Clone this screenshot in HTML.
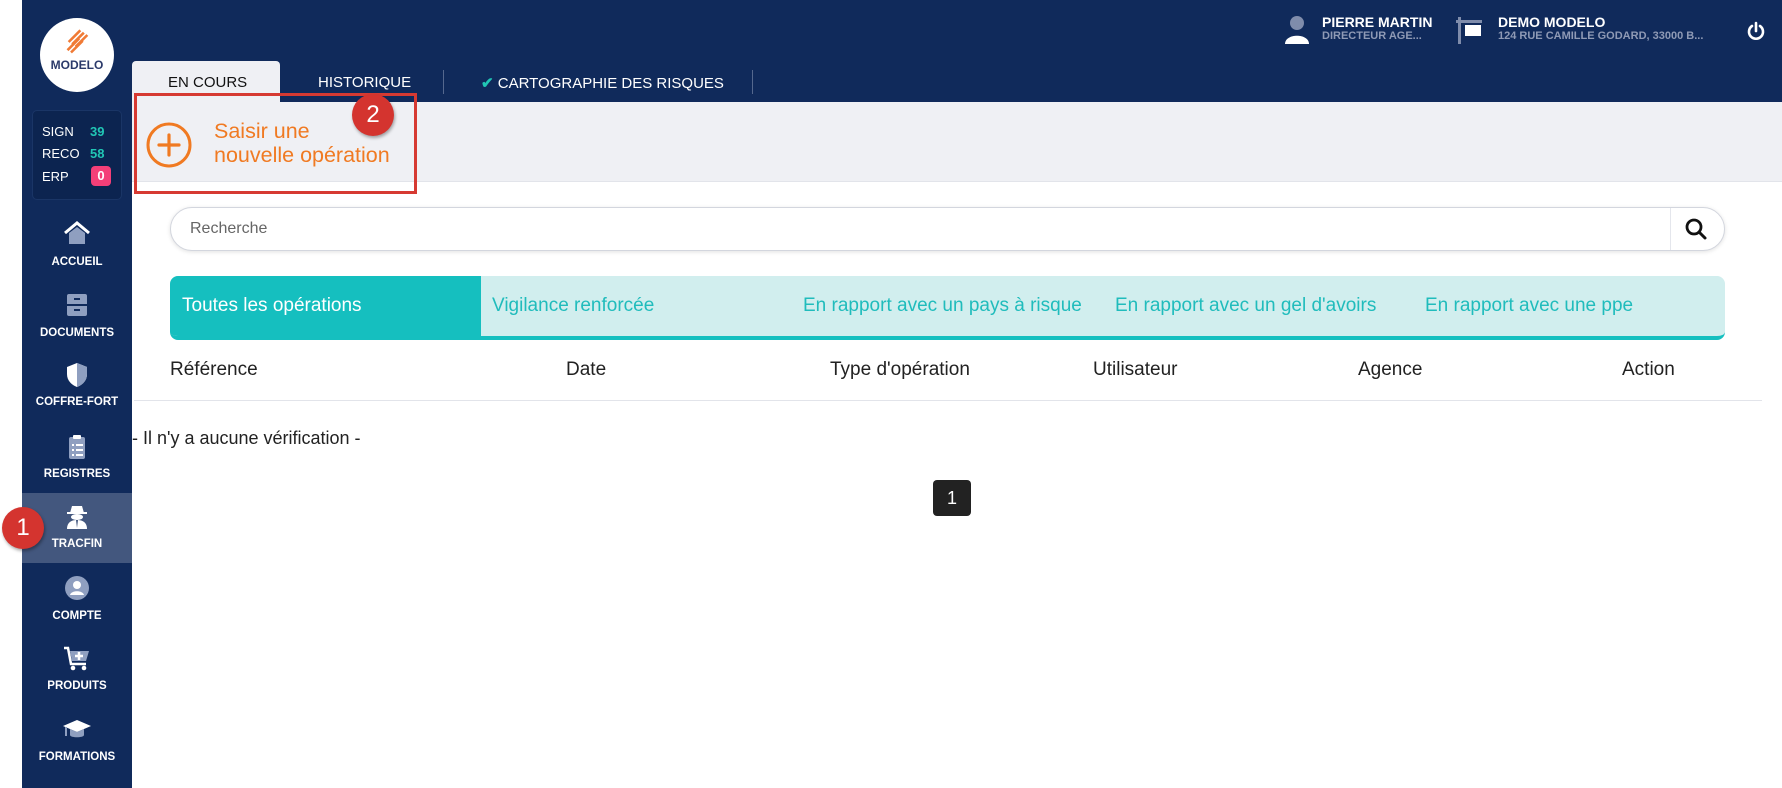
<!DOCTYPE html>
<html><head><meta charset="utf-8"><style>
*{margin:0;padding:0;box-sizing:border-box}
body{width:1782px;height:788px;background:#fff;font-family:"Liberation Sans",Arial,sans-serif;position:relative;overflow:hidden}
.abs{position:absolute}
.top{left:22px;top:0;width:1760px;height:102px;background:#102a5b}
.side{left:22px;top:0;width:110px;height:788px;background:#102a5b}
.lbl{position:absolute;left:22px;width:110px;text-align:center;color:#fff;font-size:11.5px;font-weight:bold}
.ico{position:absolute;left:62px;width:30px;height:26px}
.htab{position:absolute;top:74px;font-size:15px;color:#fff}
.th{position:absolute;top:359px;font-size:19px;color:#222}
.ft{position:absolute;top:295px;font-size:19px;color:#20bcbc}
</style></head><body>
<div class="abs top"></div>
<div class="abs side"></div>
<!-- logo -->
<div class="abs" style="left:40px;top:18px;width:74px;height:74px;border-radius:50%;background:#fff"></div>
<svg class="abs" style="left:64px;top:28px" width="28" height="28" viewBox="0 0 24 24"><g stroke="#f07a35" stroke-width="2.2"><path d="M4 12 L14 2"/><path d="M7 14 L17 4"/><path d="M10 16 L20 6"/><path d="M3 19 L13 9"/><path d="M6 21 L16 11"/></g></svg>
<div class="abs" style="left:40px;top:58px;width:74px;text-align:center;font-size:12px;font-weight:bold;color:#2b3a6a">MODELO</div>
<!-- stats -->
<div class="abs" style="left:32px;top:110px;width:90px;height:90px;background:#0c2450;border-radius:5px;border:1px solid #1a3566"></div>
<div class="abs" style="left:42px;top:124px;font-size:13px;color:#fff">SIGN</div><div class="abs" style="left:90px;top:124px;font-size:13px;color:#21c6b5;font-weight:bold">39</div>
<div class="abs" style="left:42px;top:146px;font-size:13px;color:#fff">RECO</div><div class="abs" style="left:90px;top:146px;font-size:13px;color:#21c6b5;font-weight:bold">58</div>
<div class="abs" style="left:42px;top:169px;font-size:13px;color:#fff">ERP</div><div class="abs" style="left:91px;top:166px;width:20px;height:20px;background:#f43f78;border-radius:4px;color:#fff;font-size:13px;font-weight:bold;text-align:center;line-height:20px">0</div>
<!-- sidebar items -->
<div class="abs" style="left:22px;top:493px;width:110px;height:70px;background:#43577e"></div>
<svg class="ico" style="top:220px" viewBox="0 0 30 26"><path d="M3 13 L15 3 L27 13" fill="none" stroke="#fff" stroke-width="3"/><path d="M7 13 V24 H23 V13 L15 7Z" fill="#8f9fc0"/></svg>
<div class="lbl" style="top:256px">ACCUEIL</div>
<svg class="ico" style="top:292px" viewBox="0 0 30 26"><rect x="5" y="2" width="20" height="22" rx="2" fill="#8f9fc0"/><line x1="5" y1="13" x2="25" y2="13" stroke="#102a5b" stroke-width="2"/><rect x="12" y="6" width="6" height="2" fill="#102a5b"/><rect x="12" y="17" width="6" height="2" fill="#102a5b"/></svg>
<div class="lbl" style="top:327px">DOCUMENTS</div>
<svg class="ico" style="top:362px" viewBox="0 0 30 26"><path d="M15 1 L25 5 V12 C25 19 20 23 15 25 C10 23 5 19 5 12 V5Z" fill="#fff"/><path d="M15 1 L25 5 V12 C25 19 20 23 15 25Z" fill="#8f9fc0"/></svg>
<div class="lbl" style="top:396px">COFFRE-FORT</div>
<svg class="ico" style="top:434px" viewBox="0 0 30 26"><rect x="7" y="3" width="16" height="22" rx="2" fill="#8f9fc0"/><rect x="11" y="1" width="8" height="4" rx="1" fill="#fff"/><g fill="#fff"><rect x="10" y="10" width="2" height="2"/><rect x="14" y="10" width="7" height="2"/><rect x="10" y="15" width="2" height="2"/><rect x="14" y="15" width="7" height="2"/><rect x="10" y="20" width="2" height="2"/><rect x="14" y="20" width="7" height="2"/></g></svg>
<div class="lbl" style="top:468px">REGISTRES</div>
<svg class="ico" style="top:504px" viewBox="0 0 30 26"><path d="M8 9 L10 2 H20 L22 9Z" fill="#fff"/><rect x="5" y="8" width="20" height="2" fill="#fff"/><ellipse cx="15" cy="13" rx="6" ry="3" fill="#fff"/><path d="M5 25 C5 18 10 16 15 16 C20 16 25 18 25 25Z" fill="#fff"/><path d="M14 16 L15 24 L16 16Z" fill="#43577e"/></svg>
<div class="lbl" style="top:538px">TRACFIN</div>
<svg class="ico" style="top:575px" viewBox="0 0 30 26"><circle cx="15" cy="13" r="12" fill="#8f9fc0"/><circle cx="15" cy="10" r="4" fill="#fff"/><path d="M8 20 C9 15 21 15 22 20Z" fill="#fff"/></svg>
<div class="lbl" style="top:610px">COMPTE</div>
<svg class="ico" style="top:646px" viewBox="0 0 30 26"><path d="M2 2 H6 L9 18 H24" fill="none" stroke="#fff" stroke-width="2.5"/><path d="M8 5 H27 L24 15 H10Z" fill="#8f9fc0"/><path d="M17 6 V14 M13 10 H21" stroke="#fff" stroke-width="2.5"/><circle cx="11" cy="22" r="2.3" fill="#fff"/><circle cx="22" cy="22" r="2.3" fill="#fff"/></svg>
<div class="lbl" style="top:680px">PRODUITS</div>
<svg class="ico" style="top:717px" viewBox="0 0 30 26"><path d="M15 3 L29 9 L15 15 L1 9Z" fill="#fff"/><path d="M8 12 V18 C8 21 22 21 22 18 V12 L15 15Z" fill="#8f9fc0"/><path d="M4 10 V19" stroke="#8f9fc0" stroke-width="2"/></svg>
<div class="lbl" style="top:751px">FORMATIONS</div>
<!-- badge 1 -->
<div class="abs" style="left:2px;top:507px;width:42px;height:42px;border-radius:50%;background:#d4342f;color:#fff;font-size:24px;text-align:center;line-height:42px;box-shadow:1px 2px 3px rgba(0,0,0,.35)">1</div>
<!-- header tabs -->
<div class="abs" style="left:132px;top:61px;width:148px;height:41px;background:#eff0f4;border-radius:4px 4px 0 0"></div>
<div class="htab" style="left:168px;color:#111">EN COURS</div>
<div class="htab" style="left:318px">HISTORIQUE</div>
<div class="abs" style="left:443px;top:70px;width:1px;height:24px;background:#55688e"></div>
<div class="htab" style="left:481px"><span style="color:#21c6b5;font-weight:bold">✔</span> CARTOGRAPHIE DES RISQUES</div>
<div class="abs" style="left:752px;top:70px;width:1px;height:24px;background:#55688e"></div>
<!-- user -->
<svg class="abs" style="left:1284px;top:15px" width="26" height="30" viewBox="0 0 26 30"><circle cx="13" cy="8" r="7" fill="#7f8cab"/><path d="M1 29 C1 18 25 18 25 29Z" fill="#fff"/></svg>
<div class="abs" style="left:1322px;top:14px;font-size:14px;font-weight:bold;color:#fff">PIERRE MARTIN</div>
<div class="abs" style="left:1322px;top:30px;font-size:11px;font-weight:bold;color:#8f9ab5">DIRECTEUR AGE...</div>
<svg class="abs" style="left:1455px;top:15px" width="30" height="30" viewBox="0 0 30 30"><rect x="3" y="2" width="3" height="27" fill="#7f8cab"/><rect x="1" y="5" width="26" height="3" fill="#7f8cab"/><rect x="10" y="10" width="16" height="11" fill="#fff"/></svg>
<div class="abs" style="left:1498px;top:14px;font-size:14px;font-weight:bold;color:#fff">DEMO MODELO</div>
<div class="abs" style="left:1498px;top:30px;font-size:11px;font-weight:bold;color:#8f9ab5">124 RUE CAMILLE GODARD, 33000 B...</div>
<svg class="abs" style="left:1746px;top:21px" width="20" height="20" viewBox="0 0 20 20"><path d="M6 5 A7 7 0 1 0 14 5" fill="none" stroke="#fff" stroke-width="2.6" stroke-linecap="round"/><path d="M10 2 V10" stroke="#fff" stroke-width="2.6" stroke-linecap="round"/></svg>
<!-- gray band -->
<div class="abs" style="left:132px;top:102px;width:1650px;height:80px;background:#eff0f4;border-bottom:1px solid #e2e4ea"></div>
<!-- red box -->
<div class="abs" style="left:134px;top:93px;width:283px;height:101px;border:3px solid #d63a32"></div>
<svg class="abs" style="left:145px;top:121px" width="48" height="48" viewBox="0 0 48 48"><circle cx="24" cy="24" r="21" fill="none" stroke="#f07a22" stroke-width="3"/><path d="M24 14 V34 M14 24 H34" stroke="#f07a22" stroke-width="3.2" stroke-linecap="round"/></svg>
<div class="abs" style="left:214px;top:119px;font-size:21.5px;line-height:24px;color:#f07a22">Saisir une<br>nouvelle opération</div>
<div class="abs" style="left:352px;top:94px;width:42px;height:42px;border-radius:50%;background:#d4342f;color:#fff;font-size:24px;text-align:center;line-height:42px;box-shadow:1px 2px 3px rgba(0,0,0,.35)">2</div>
<!-- search -->
<div class="abs" style="left:170px;top:207px;width:1555px;height:44px;border:1px solid #d3d6de;border-radius:22px;background:#fff;box-shadow:0 1px 4px rgba(0,0,0,.12)"></div>
<div class="abs" style="left:1670px;top:208px;width:1px;height:42px;background:#e4e6ec"></div>
<div class="abs" style="left:190px;top:220px;font-size:16px;color:#666">Recherche</div>
<svg class="abs" style="left:1684px;top:217px" width="24" height="24" viewBox="0 0 24 24"><circle cx="10" cy="10" r="7" fill="none" stroke="#111" stroke-width="2.8"/><path d="M15 15 L21 21" stroke="#111" stroke-width="3" stroke-linecap="round"/></svg>
<!-- filter -->
<div class="abs" style="left:170px;top:276px;width:1555px;height:64px;background:#d1eeee;border-radius:8px;border-bottom:4px solid #15bfbf;overflow:hidden"><div style="width:311px;height:64px;background:#15bfbf"></div></div>
<div class="ft" style="left:182px;color:#fff">Toutes les opérations</div>
<div class="ft" style="left:492px">Vigilance renforcée</div>
<div class="ft" style="left:803px">En rapport avec un pays à risque</div>
<div class="ft" style="left:1115px">En rapport avec un gel d'avoirs</div>
<div class="ft" style="left:1425px">En rapport avec une ppe</div>
<!-- table -->
<div class="th" style="left:170px">Référence</div>
<div class="th" style="left:566px">Date</div>
<div class="th" style="left:830px">Type d'opération</div>
<div class="th" style="left:1093px">Utilisateur</div>
<div class="th" style="left:1358px">Agence</div>
<div class="th" style="left:1622px">Action</div>
<div class="abs" style="left:134px;top:400px;width:1628px;height:1px;background:#e2e4ea"></div>
<div class="abs" style="left:132px;top:428px;font-size:18px;color:#222">- Il n'y a aucune vérification -</div>
<div class="abs" style="left:933px;top:480px;width:38px;height:36px;background:#222;border-radius:4px;color:#fff;font-size:18px;text-align:center;line-height:36px">1</div>
</body></html>
